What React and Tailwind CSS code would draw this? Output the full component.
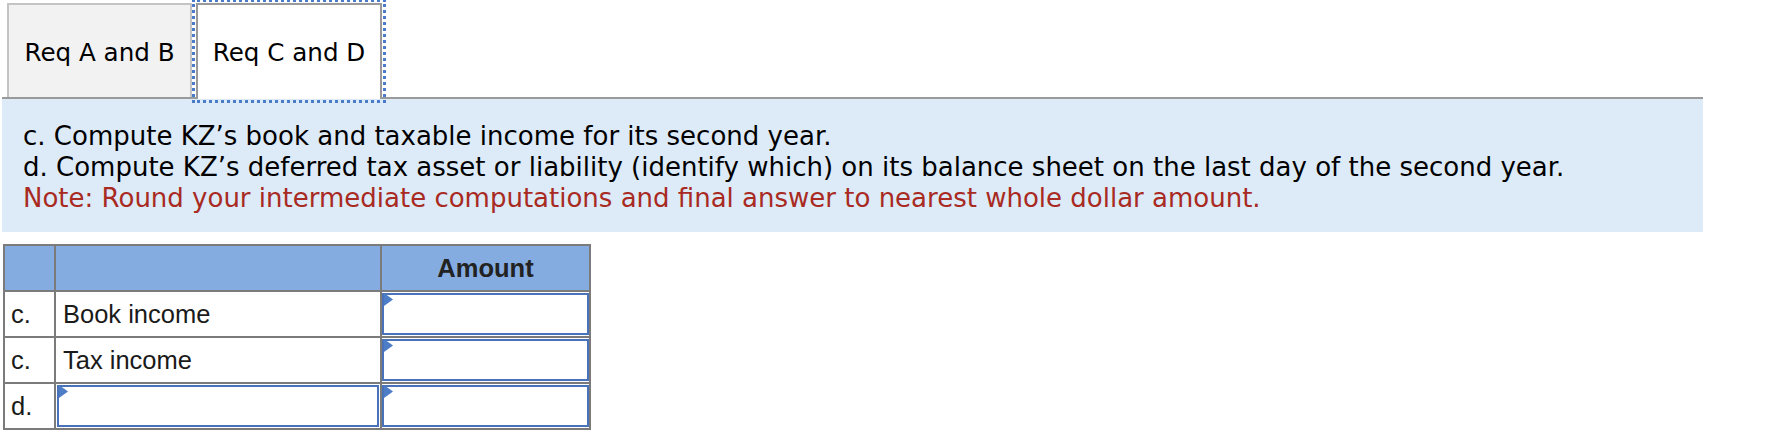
import React from 'react';

const Flag = () => (
  <svg className="absolute left-0 -top-[2px]" width="9" height="13" viewBox="0 0 9 13">
    <polygon points="0,0 9,6.5 0,13" fill="#4c7dc6" />
  </svg>
);

const InputBox = () => (
  <div className="relative h-full border-2 border-[#4a72b8] bg-white">
    <Flag />
  </div>
);

const rows = [
  { tag: 'c.', label: 'Book income' },
  { tag: 'c.', label: 'Tax income' },
  { tag: 'd.', label: null },
];

export default function App() {
  return (
    <div className="bg-white min-h-screen">
      <div className="ml-[2px] w-[1701px]">
        {/* tabs */}
        <div className="flex items-end pt-[3px] pl-[5px] border-b-2 border-[#9a9a9a] font-['DejaVu_Sans',sans-serif] text-[24.6px] text-black">
          <div className="w-[185px] h-[94px] pt-[4px] flex items-center justify-center bg-[#f2f2f2] border-2 border-b-0 border-[#c4c4c4]">
            Req A and B
          </div>
          <div className="ml-[4px] -mb-[2px] w-[186px] h-[96px] pt-[2px] flex items-center justify-center bg-white border-2 border-b-0 border-[#9a9a9a] outline-[3px] outline-dotted outline-[#4a7bc8] outline-offset-[1px]">
            Req C and D
          </div>
        </div>

        {/* instructions */}
        <div className="bg-[#ddeaf7] pt-[22px] pb-[18px] pl-[21px] font-['DejaVu_Sans',sans-serif] text-[26px] leading-[31px] text-black">
          <p>c. Compute KZ’s book and taxable income for its second year.</p>
          <p>d. Compute KZ’s deferred tax asset or liability (identify which) on its balance sheet on the last day of the second year.</p>
          <p className="text-[#a82a22]">Note: Round your intermediate computations and final answer to nearest whole dollar amount.</p>
        </div>

        {/* table */}
        <table className="mt-[12px] ml-[1px] w-[588px] table-fixed border-collapse font-['Liberation_Sans',Arial,sans-serif] text-[25.5px] text-[#1a1a1a]">
          <thead>
            <tr className="bg-[#84ace0]">
              <th className="w-[51px] h-[46px] border-2 border-[#7b7b7b]"></th>
              <th className="w-[326px] h-[46px] border-2 border-[#7b7b7b]"></th>
              <th className="h-[46px] border-2 border-[#7b7b7b] font-bold text-[#222]">Amount</th>
            </tr>
          </thead>
          <tbody>
            {rows.map((r, i) => (
              <tr key={i}>
                <td className="h-[46px] border-2 border-[#7b7b7b] pl-[6px] align-middle">{r.tag}</td>
                {r.label ? (
                  <td className="h-[46px] border-2 border-[#7b7b7b] pl-[7px] align-middle">{r.label}</td>
                ) : (
                  <td className="h-[46px] border-2 border-[#7b7b7b] p-[1px]">
                    <InputBox />
                  </td>
                )}
                <td className="h-[46px] border-2 border-[#7b7b7b] py-[1px] px-0">
                  <InputBox />
                </td>
              </tr>
            ))}
          </tbody>
        </table>
      </div>
    </div>
  );
}
